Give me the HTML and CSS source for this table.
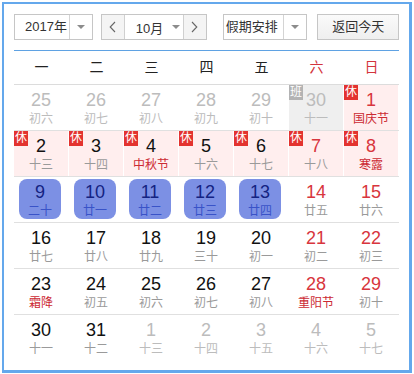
FILE: index.html
```html
<!DOCTYPE html>
<html>
<head>
<meta charset="utf-8">
<link rel="stylesheet" href="styles.css">
</head>
<body>
<div class="cal">
  <div class="bar">
    <div class="select year"><span class="sel-text">2017年</span><span class="sel-arrow"><i class="tri"></i></span></div>
    <div class="mgroup">
      <span class="nav"><svg width="7" height="12" viewBox="0 0 7 12"><path d="M6 1 L1.2 6 L6 11" fill="none" stroke="#666" stroke-width="1.1"/></svg></span>
      <span class="month">10月<i class="tri"></i></span>
      <span class="nav"><svg width="7" height="12" viewBox="0 0 7 12"><path d="M1 1 L5.8 6 L1 11" fill="none" stroke="#666" stroke-width="1.1"/></svg></span>
    </div>
    <div class="select holsel"><span class="sel-text">假期安排</span><span class="sel-arrow"><i class="tri"></i></span></div>
    <div class="today">返回今天</div>
  </div>
  <div class="week">
    <span>一</span><span>二</span><span>三</span><span>四</span><span>五</span><span class="red">六</span><span class="red">日</span>
  </div>
  <div class="rows">
    <div class="row">
      <div class="d other"><div class="n">25</div><div class="l">初六</div></div>
      <div class="d other"><div class="n">26</div><div class="l">初七</div></div>
      <div class="d other"><div class="n">27</div><div class="l">初八</div></div>
      <div class="d other"><div class="n">28</div><div class="l">初九</div></div>
      <div class="d other"><div class="n">29</div><div class="l">初十</div></div>
      <div class="d other work"><span class="badge ban">班</span><div class="n">30</div><div class="l">十一</div></div>
      <div class="d wk off"><span class="badge">休</span><div class="n">1</div><div class="l fest">国庆节</div></div>
    </div>
    <div class="row">
      <div class="d off"><span class="badge">休</span><div class="n">2</div><div class="l">十三</div></div>
      <div class="d off"><span class="badge">休</span><div class="n">3</div><div class="l">十四</div></div>
      <div class="d off"><span class="badge">休</span><div class="n">4</div><div class="l fest">中秋节</div></div>
      <div class="d off"><span class="badge">休</span><div class="n">5</div><div class="l">十六</div></div>
      <div class="d off"><span class="badge">休</span><div class="n">6</div><div class="l">十七</div></div>
      <div class="d wk off"><span class="badge">休</span><div class="n">7</div><div class="l">十八</div></div>
      <div class="d wk off"><span class="badge">休</span><div class="n">8</div><div class="l fest">寒露</div></div>
    </div>
    <div class="row">
      <div class="d cur"><div class="box"><div class="n">9</div><div class="l">二十</div></div></div>
      <div class="d cur"><div class="box"><div class="n">10</div><div class="l">廿一</div></div></div>
      <div class="d cur"><div class="box"><div class="n">11</div><div class="l">廿二</div></div></div>
      <div class="d cur"><div class="box"><div class="n">12</div><div class="l">廿三</div></div></div>
      <div class="d cur"><div class="box"><div class="n">13</div><div class="l">廿四</div></div></div>
      <div class="d wk"><div class="n">14</div><div class="l">廿五</div></div>
      <div class="d wk"><div class="n">15</div><div class="l">廿六</div></div>
    </div>
    <div class="row">
      <div class="d"><div class="n">16</div><div class="l">廿七</div></div>
      <div class="d"><div class="n">17</div><div class="l">廿八</div></div>
      <div class="d"><div class="n">18</div><div class="l">廿九</div></div>
      <div class="d"><div class="n">19</div><div class="l">三十</div></div>
      <div class="d"><div class="n">20</div><div class="l">初一</div></div>
      <div class="d wk"><div class="n">21</div><div class="l">初二</div></div>
      <div class="d wk"><div class="n">22</div><div class="l">初三</div></div>
    </div>
    <div class="row">
      <div class="d"><div class="n">23</div><div class="l fest">霜降</div></div>
      <div class="d"><div class="n">24</div><div class="l">初五</div></div>
      <div class="d"><div class="n">25</div><div class="l">初六</div></div>
      <div class="d"><div class="n">26</div><div class="l">初七</div></div>
      <div class="d"><div class="n">27</div><div class="l">初八</div></div>
      <div class="d wk"><div class="n">28</div><div class="l fest">重阳节</div></div>
      <div class="d wk"><div class="n">29</div><div class="l">初十</div></div>
    </div>
    <div class="row">
      <div class="d"><div class="n">30</div><div class="l">十一</div></div>
      <div class="d"><div class="n">31</div><div class="l">十二</div></div>
      <div class="d other"><div class="n">1</div><div class="l">十三</div></div>
      <div class="d other"><div class="n">2</div><div class="l">十四</div></div>
      <div class="d other"><div class="n">3</div><div class="l">十五</div></div>
      <div class="d other"><div class="n">4</div><div class="l">十六</div></div>
      <div class="d other"><div class="n">5</div><div class="l">十七</div></div>
    </div>
  </div>
</div>
</body>
</html>
```
FILE: styles.css
```css
* { box-sizing: border-box; margin: 0; padding: 0; }
body {
  margin: 0;
  background: #fff;
  font-family: "Liberation Sans", "Noto Sans CJK SC", sans-serif;
  color: #333;
}
.cal {
  margin: 2px 0 0 2px;
  width: 410px;
  border: 2px solid #64a8ec;
  border-right-width: 3px;
  border-bottom-width: 3px;
  padding: 10px 10px 10px 10px;
  background: #fff;
}
.bar {
  display: flex;
  height: 26px;
  font-size: 13px;
  color: #333;
}
.select {
  display: flex;
  border: 1px solid #c6c6c6;
  background: #fff;
}
.year { width: 79px; }
.holsel { width: 85px; margin-left: 16px; }
.sel-text {
  line-height: 24px;
  padding-left: 10px;
  flex: 1;
}
.holsel .sel-text { padding-left: 2px; }
.sel-arrow {
  width: 23px;
  border-left: 1px solid #d4d4d4;
  display: flex;
  align-items: center;
  justify-content: center;
}
.tri {
  display: inline-block;
  width: 0;
  height: 0;
  border-left: 4px solid transparent;
  border-right: 4px solid transparent;
  border-top: 4px solid #8c8c8c;
}
.mgroup {
  display: flex;
  margin-left: 8px;
  width: 106px;
  border: 1px solid #c6c6c6;
}
.nav {
  width: 22px;
  background: #f4f4f4;
  display: flex;
  align-items: center;
  justify-content: center;
}
.month {
  width: 60px;
  border-left: 1px solid #d0d0d0;
  border-right: 1px solid #d0d0d0;
  display: flex;
  align-items: center;
  gap: 9px;
  padding-left: 11px;
  background: #fff;
}
.today {
  margin-left: 10px;
  width: 82px;
  border: 1px solid #c6c6c6;
  background: linear-gradient(#fafafa, #efefef);
  text-align: center;
  line-height: 24px;
}
.week {
  margin-top: 10px;
  display: grid;
  grid-template-columns: repeat(7, 1fr);
  height: 35px;
  border-top: 1px solid #5fa2e3;
  border-bottom: 1px solid #dcdcdc;
  font-size: 14px;
  line-height: 33px;
  text-align: center;
  color: #222;
}
.week .red { color: #d3343c; }
.row {
  display: grid;
  grid-template-columns: repeat(7, 55px);
  height: 46px;
  border-bottom: 1px solid #e0e0e0;
}
.row:last-child { height: 45px; border-bottom: none; }
.d {
  position: relative;
  height: 45px;
  padding-top: 5px;
  text-align: center;
  border-right: 1px solid #fff;
}
.n {
  font-size: 18px;
  line-height: 20px;
  color: #111;
}
.l {
  font-size: 12px;
  line-height: 14px;
  margin-top: 2px;
  color: #9a9a9a;
}
.wk .n { color: #d8353d; }
.l.fest { color: #cc2a33; }
.other .n { color: #bcbcbc; }
.other .l { color: #bcbcbc; }
.off { background: #ffeeee; }
.work { background: #efefef; }
.badge {
  position: absolute;
  left: 0;
  top: 0;
  width: 14px;
  height: 15px;
  font-size: 12px;
  line-height: 15px;
  color: #fff;
  background: #e3332f;
  text-align: center;
}
.badge.ban { background: #b3b3b3; }
.cur { padding-top: 0; }
.box {
  margin: 2px 7px 0 5px;
  height: 40px;
  border-radius: 8px;
  background: #7c90e4;
  padding-top: 3px;
}
.cur .n { color: #142382; }
.cur .l { color: #3953c8; }
```
